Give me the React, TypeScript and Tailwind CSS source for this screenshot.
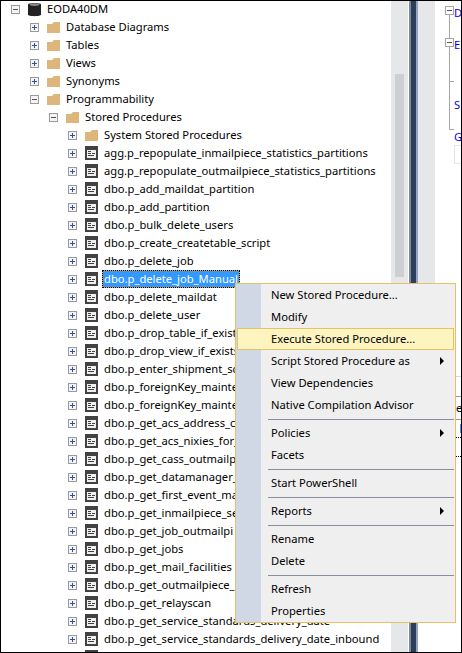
const procs = [
  "agg.p_repopulate_inmailpiece_statistics_partitions",
  "agg.p_repopulate_outmailpiece_statistics_partitions",
  "dbo.p_add_maildat_partition",
  "dbo.p_add_partition",
  "dbo.p_bulk_delete_users",
  "dbo.p_create_createtable_script",
  "dbo.p_delete_job",
  "dbo.p_delete_job_Manual",
  "dbo.p_delete_maildat",
  "dbo.p_delete_user",
  "dbo.p_drop_table_if_exists",
  "dbo.p_drop_view_if_exists",
  "dbo.p_enter_shipment_sc",
  "dbo.p_foreignKey_mainte",
  "dbo.p_foreignKey_mainte",
  "dbo.p_get_acs_address_c",
  "dbo.p_get_acs_nixies_for_",
  "dbo.p_get_cass_outmailp",
  "dbo.p_get_datamanager_",
  "dbo.p_get_first_event_ma",
  "dbo.p_get_inmailpiece_se",
  "dbo.p_get_job_outmailpi",
  "dbo.p_get_jobs",
  "dbo.p_get_mail_facilities",
  "dbo.p_get_outmailpiece_",
  "dbo.p_get_relayscan",
  "dbo.p_get_service_standards_delivery_date",
  "dbo.p_get_service_standards_delivery_date_inbound",
  "",
];

function Expander({ open }: { open?: boolean }) {
  return (
    <svg width="9" height="9" viewBox="0 0 9 9" className="shrink-0">
      <rect x="0.5" y="0.5" width="8" height="8" fill="#f4f4f6" stroke="#9a9a9a" />
      <rect x="2" y="4" width="5" height="1" fill={open ? "#555555" : "#2f5597"} />
      {!open && <rect x="4" y="2" width="1" height="5" fill="#2f5597" />}
    </svg>
  );
}

function Folder() {
  return (
    <svg width="13" height="11" viewBox="0 0 13 11" className="shrink-0">
      <path d="M0 2H5L7 0H13V11H0Z" fill="#dcb67a" />
    </svg>
  );
}

function ProcIcon() {
  return (
    <svg width="13" height="14" viewBox="0 0 13 14" className="shrink-0">
      <rect width="13" height="14" fill="#424242" />
      <rect x="2" y="4" width="9" height="8" fill="#f0eff1" />
      <rect x="3" y="5" width="3" height="1" fill="#424242" />
      <rect x="3" y="7" width="3" height="1" fill="#424242" />
      <rect x="7" y="7" width="3" height="1" fill="#424242" />
      <rect x="3" y="9" width="6" height="1" fill="#424242" />
    </svg>
  );
}

function DbIcon() {
  return (
    <svg width="13" height="15" viewBox="0 0 13 15" className="shrink-0">
      <path d="M0 2.5C0 .5 13 .5 13 2.5V12.5C13 14.7 0 14.7 0 12.5Z" fill="#222222" />
      <ellipse cx="6.5" cy="2.6" rx="5" ry="1.3" fill="#8a8a8a" />
    </svg>
  );
}

function TreeRow({
  level,
  open,
  icon,
  children,
}: {
  level: string;
  open?: boolean;
  icon: React.ReactNode;
  children: React.ReactNode;
}) {
  return (
    <div className={`flex h-[18px] shrink-0 items-center whitespace-nowrap ${level}`}>
      <Expander open={open} />
      <span className="ml-[8px] flex w-[13px] shrink-0 justify-center">{icon}</span>
      {children}
    </div>
  );
}

function Label({ children }: { children: React.ReactNode }) {
  return <span className="ml-[6px] text-black">{children}</span>;
}

function MenuItem({ label, arrow, active }: { label: string; arrow?: boolean; active?: boolean }) {
  return (
    <div
      className={`mx-[1px] flex h-[22px] items-center justify-between border pl-[33px] pr-[9px] ${
        active ? "border-[#e5c365] bg-[#fdf4bf]" : "border-transparent"
      }`}
    >
      <span>{label}</span>
      {arrow && (
        <svg width="4" height="8" viewBox="0 0 4 8">
          <path d="M0 0L4 4L0 8Z" fill="#000000" />
        </svg>
      )}
    </div>
  );
}

function Separator() {
  return (
    <div className="flex h-[6px] items-center pl-[32px] pr-[1px]">
      <div className="h-px w-full bg-[#8a8e9c]" />
    </div>
  );
}

function ContextMenu() {
  return (
    <div className="absolute left-[234px] top-[282px] w-[221px] border border-[#e5c365] bg-[linear-gradient(to_right,#d0d7e5_25px,#efefef_25px)] text-black">
      <MenuItem label="New Stored Procedure..." />
      <MenuItem label="Modify" />
      <MenuItem label="Execute Stored Procedure..." active />
      <MenuItem label="Script Stored Procedure as" arrow />
      <MenuItem label="View Dependencies" />
      <MenuItem label="Native Compilation Advisor" />
      <Separator />
      <MenuItem label="Policies" arrow />
      <MenuItem label="Facets" />
      <Separator />
      <MenuItem label="Start PowerShell" />
      <Separator />
      <MenuItem label="Reports" arrow />
      <Separator />
      <MenuItem label="Rename" />
      <MenuItem label="Delete" />
      <Separator />
      <MenuItem label="Refresh" />
      <MenuItem label="Properties" />
    </div>
  );
}

function DetailPane() {
  return (
    <div className="flex min-w-0 flex-1 flex-col overflow-hidden bg-white">
      <div className="flex h-[375px] shrink-0">
        <div className="w-[17px] shrink-0 bg-[#e6e7e9]" />
        <div className="flex min-w-0 flex-1 pl-[10px] pt-[5px]">
          <svg width="10" height="124" viewBox="0 0 10 124" className="shrink-0">
            <path d="M4.5 9V32M4.5 41V123.5H9M4.5 75.5H9" fill="none" stroke="#a6a6a6" />
            <rect x="0.5" y="0.5" width="8" height="8" fill="#ffffff" stroke="#a6a6a6" />
            <rect x="2" y="4" width="5" height="1" fill="#555555" />
            <rect x="0.5" y="32.5" width="8" height="8" fill="#ffffff" stroke="#a6a6a6" />
            <rect x="2" y="36" width="5" height="1" fill="#555555" />
          </svg>
          <div className="-ml-px flex flex-col leading-[14px] text-[#0000ff]">
            <span className="h-[32px]">D</span>
            <span className="h-[60px]">E</span>
            <span className="h-[32px]">S</span>
            <span className="h-[15px]">G</span>
            <div className="h-[19px] w-[8px] border border-[#e6e6e6]" />
          </div>
        </div>
      </div>
      <div className="ml-[38px] flex flex-1 flex-col">
        <div className="h-[21px] border-y border-[#d8d8d8] border-b-[#9a9a9a]" />
        <div className="flex h-[23px] items-center border-b border-[#9a9a9a] leading-none">e</div>
        <div className="ml-[4px] mt-[4px] h-[9px] w-[2px] bg-[#3399ff]" />
        <div className="mt-[4px] h-px w-full border-t border-dotted border-black" />
        <div className="mt-[18px] h-px w-full border-t border-dotted border-black" />
      </div>
    </div>
  );
}

export default function App() {
  return (
    <div
      className="relative flex h-[653px] w-[462px] overflow-hidden border border-black bg-white text-[11.2px] leading-[18px]"
      style={{ fontFamily: '"Noto Sans", sans-serif' }}
    >
      <div className="flex w-[390px] shrink-0 flex-col overflow-hidden pl-[10px]">
        <div className="-mt-px flex flex-col">
          <TreeRow level="pl-0" open icon={<DbIcon />}>
            <Label>EODA40DM</Label>
          </TreeRow>
          <TreeRow level="pl-[19px]" icon={<Folder />}><Label>Database Diagrams</Label></TreeRow>
          <TreeRow level="pl-[19px]" icon={<Folder />}><Label>Tables</Label></TreeRow>
          <TreeRow level="pl-[19px]" icon={<Folder />}><Label>Views</Label></TreeRow>
          <TreeRow level="pl-[19px]" icon={<Folder />}><Label>Synonyms</Label></TreeRow>
          <TreeRow level="pl-[19px]" open icon={<Folder />}><Label>Programmability</Label></TreeRow>
          <TreeRow level="pl-[38px]" open icon={<Folder />}><Label>Stored Procedures</Label></TreeRow>
          <TreeRow level="pl-[57px]" icon={<Folder />}><Label>System Stored Procedures</Label></TreeRow>
          {procs.map((name, i) => (
            <TreeRow key={i} level="pl-[57px]" icon={<ProcIcon />}>
              {name === "dbo.p_delete_job_Manual" ? (
                <span className="ml-[4px] bg-[#f0a030]">
                  <span className="block border border-dotted border-black bg-[#3399ff] bg-clip-padding px-[1px] leading-[16px] text-white">
                    {name}
                  </span>
                </span>
              ) : (
                <Label>{name}</Label>
              )}
            </TreeRow>
          ))}
        </div>
      </div>
      <div className="flex w-[18px] shrink-0 flex-col border-r border-white bg-[#e6e7e9] pl-[4px] pr-[5px] pt-[73px]">
        <div className="h-[203px] w-[9px] bg-[#cdcfd3]" />
      </div>
      <div className="w-[9px] shrink-0 border-x-2 border-l-[#7a88a0] border-r-[#93a3c4] bg-[#2b3f5c]" />
      <DetailPane />
      <ContextMenu />
    </div>
  );
}
